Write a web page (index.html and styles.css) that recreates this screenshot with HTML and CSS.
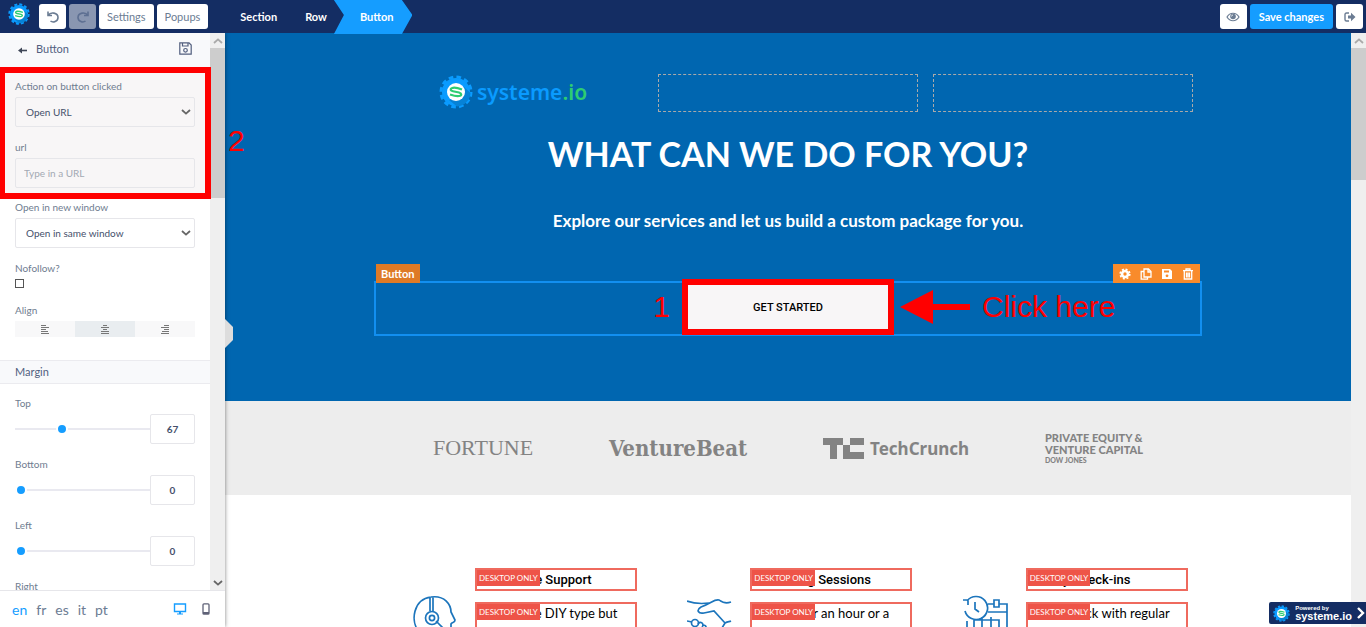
FILE: index.html
```html
<!doctype html>
<html lang="en">
    <head>
        <meta charset="utf-8">
        <title>Page editor</title>
        <link rel="stylesheet" href="styles.css">
    </head>
    <body>
        <svg class="defs" width="0" height="0">
            <symbol id="gear" viewBox="0 0 34 34">
                <circle cx="17" cy="17" r="14" fill="#0a9bff"/>
                <circle cx="17" cy="17" r="15" fill="none" stroke="#0a9bff" stroke-width="3" stroke-dasharray="4.600 3.254"/>
                <path d="M23 23 L10 25 L18 31.500 A14.500 14.500 0 0 0 31.500 18 L25 12 Z" fill="#0782d6"/>
                <circle cx="17" cy="17" r="9" fill="#fff"/>
                <path d="M23 14.500 C19 13 17 12.300 14 12.800 C11 13.500 11 15.500 14 16.200 L20 17.500 C23 18.500 23 20.500 20 21 C17 21.500 14 20.500 11 19.500" fill="none" stroke="#2ecc71" stroke-width="2.200"/>
            </symbol>
            <symbol id="chevron" viewBox="0 0 10 6">
                <path d="M1 1 L5 4.600 L9 1" fill="none" stroke="#666" stroke-width="1.800"/>
            </symbol>
        </svg>

        <header class="topbar">
            <svg class="logo"><use href="#gear"/></svg>
            <button class="btn icon" aria-label="Undo">
                <svg width="14" height="14" viewBox="0 0 14 14" fill="none" stroke="#6b7c93" stroke-width="1.600"><path d="M2 1.500 V5.500 H6 M2.300 5.300 C4.500 1.500 12 2.500 12 7.500 C12 11.500 7 13 4.500 11"/></svg>
            </button>
            <button class="btn icon disabled" aria-label="Redo">
                <svg width="14" height="14" viewBox="0 0 14 14" fill="none" stroke="#5d6f92" stroke-width="1.600"><path d="M12 1.500 V5.500 H8 M11.700 5.300 C9.500 1.500 2 2.500 2 7.500 C2 11.500 7 13 9.500 11"/></svg>
            </button>
            <button class="btn">Settings</button>
            <button class="btn">Popups</button>
            <nav class="crumbs">
                <a href="#">Section</a>
                <a href="#">Row</a>
                <a href="#" class="active">Button</a>
            </nav>
            <div class="actions">
                <button class="btn icon" aria-label="Preview">
                    <svg width="14" height="10" viewBox="0 0 14 10"><path d="M1 5 C4 0 10 0 13 5 C10 10 4 10 1 5 Z" fill="none" stroke="#6b7c93" stroke-width="1.200"/><circle cx="7" cy="4.500" r="2.800" fill="#6b7c93"/><path d="M5.500 4.500 A1.500 1.500 0 0 1 7 3" fill="none" stroke="#fff" stroke-width=".8"/></svg>
                </button>
                <button class="btn save">Save changes</button>
                <button class="btn icon" aria-label="Exit">
                    <svg width="12" height="10" viewBox="0 0 12 10"><path d="M5 1 H2.500 Q1 1 1 2.500 V7.500 Q1 9 2.500 9 H5" fill="none" stroke="#6b7c93" stroke-width="1.400"/><path d="M4 3.400 H7 V.8 L11.500 5 L7 9.200 V6.600 H4 Z" fill="#6b7c93"/></svg>
                </button>
            </div>
        </header>

        <div class="main">
            <aside class="sidebar">
                <div class="scroller">
                    <div class="panel">
                        <div class="panel_head">
                            <svg class="back" width="10" height="7" viewBox="0 0 10 7"><path d="M0 3.500 L4 .5 V6.500 Z" fill="#3f4757"/><path d="M3 3.500 H9" stroke="#3f4757" stroke-width="1.600"/></svg>
                            <span>Button</span>
                            <svg class="disk" width="13" height="13" viewBox="0 0 13 13" fill="none" stroke="#525f7f" stroke-width="1.200"><path d="M.8 .8 H10 L12.200 3 V12.200 H.8 Z M3.500 1 V4 H9 V1"/><circle cx="6.500" cy="8.300" r="1.800"/></svg>
                        </div>

                        <div class="marked">
                            <div class="field">
                                <label for="action">Action on button clicked</label>
                                <div class="select">
                                    <select id="action"><option>Open URL</option></select>
                                    <svg><use href="#chevron"/></svg>
                                </div>
                            </div>
                            <div class="field">
                                <label for="url">url</label>
                                <input class="text" id="url" type="text" placeholder="Type in a URL">
                            </div>
                        </div>

                        <div class="fields">
                            <div class="field">
                                <label for="target">Open in new window</label>
                                <div class="select">
                                    <select id="target"><option>Open in same window</option></select>
                                    <svg><use href="#chevron"/></svg>
                                </div>
                            </div>
                            <div class="field">
                                <label for="nofollow">Nofollow?</label>
                                <input class="check" id="nofollow" type="checkbox">
                            </div>
                            <div class="field">
                                <span class="label">Align</span>
                                <div class="align">
                                    <button aria-label="Left"><svg width="10" height="10" viewBox="0 0 10 10"><path d="M1 1.500 H6 M1 3.500 H9 M1 5.500 H6 M1 7.500 H8 M1 9.500 H9"/></svg></button>
                                    <button class="on" aria-label="Center"><svg width="10" height="10" viewBox="0 0 10 10"><path d="M3 1.500 H7 M1 3.500 H9 M3 5.500 H7 M1 7.500 H9 M1 9.500 H9"/></svg></button>
                                    <button aria-label="Right"><svg width="10" height="10" viewBox="0 0 10 10"><path d="M4 1.500 H9 M1 3.500 H9 M4 5.500 H9 M2 7.500 H9 M1 9.500 H9"/></svg></button>
                                </div>
                            </div>
                        </div>

                        <h3>Margin</h3>

                        <div class="fields">
                            <div class="field">
                                <label for="top">Top</label>
                                <div class="slider">
                                    <input type="range" id="top" min="0" max="200" value="67">
                                    <input type="text" class="num" value="67" aria-label="Top value">
                                </div>
                            </div>
                            <div class="field">
                                <label for="bottom">Bottom</label>
                                <div class="slider">
                                    <input type="range" id="bottom" min="0" max="200" value="0">
                                    <input type="text" class="num" value="0" aria-label="Bottom value">
                                </div>
                            </div>
                            <div class="field">
                                <label for="left">Left</label>
                                <div class="slider">
                                    <input type="range" id="left" min="0" max="200" value="0">
                                    <input type="text" class="num" value="0" aria-label="Left value">
                                </div>
                            </div>
                            <div class="field">
                                <label for="right">Right</label>
                                <div class="slider">
                                    <input type="range" id="right" min="0" max="200" value="0">
                                    <input type="text" class="num" value="0" aria-label="Right value">
                                </div>
                            </div>
                        </div>
                    </div>
                    <div class="scrollbar">
                        <svg class="up"><use href="#chevron"/></svg>
                        <div class="thumb"></div>
                        <svg class="down"><use href="#chevron"/></svg>
                    </div>
                </div>
                <footer class="langs">
                    <a href="#" class="current">en</a>
                    <a href="#">fr</a>
                    <a href="#">es</a>
                    <a href="#">it</a>
                    <a href="#">pt</a>
                    <div class="devices">
                        <svg width="14" height="12" viewBox="0 0 14 12"><path d="M1.500 1 H12.500 V8.500 H1.500 Z" fill="none" stroke="#159dff" stroke-width="1.400"/><path d="M6 9 H8 V10.500 H10 V11.500 H4 V10.500 H6 Z" fill="#159dff"/></svg>
                        <svg width="8" height="12" viewBox="0 0 8 12"><rect x="1" y=".8" width="6" height="10.400" rx="1" fill="none" stroke="#5f6277" stroke-width="1.300"/><path d="M1 9 H7 V11 H1 Z" fill="#5f6277"/></svg>
                    </div>
                </footer>
                <div class="handle"></div>
                <span class="note note_two">2</span>
            </aside>

            <main class="canvas">
                <div class="page">
                    <section class="hero">
                        <div class="container">
                            <div class="columns">
                                <div class="brand"><svg><use href="#gear"/></svg><span>systeme<b>.io</b></span></div>
                                <div class="empty"></div>
                                <div class="empty"></div>
                            </div>
                            <h1>WHAT CAN WE DO FOR YOU?</h1>
                            <p class="sub">Explore our services and let us build a custom package for you.</p>
                            <div class="selected">
                                <span class="tag">Button</span>
                                <div class="tools">
                                    <svg width="12" height="12" viewBox="0 0 12 12"><circle cx="6" cy="6" r="3" fill="none" stroke="#fff" stroke-width="2.600"/><circle cx="6" cy="6" r="4.800" fill="none" stroke="#fff" stroke-width="1.600" stroke-dasharray="2 1.770"/></svg>
                                    <svg width="12" height="12" viewBox="0 0 12 12" fill="none" stroke="#fff" stroke-width="1.300"><path d="M4 1 H8.500 L11 3.500 V9 H4 Z M8 1 V4 H11 M4 3.500 H1.200 V11.200 H7.500 V9"/></svg>
                                    <svg width="12" height="12" viewBox="0 0 12 12"><path d="M1 1 H9 L11 3 V11 H1 Z" fill="#fff"/><path d="M3 2.500 H8 V4.500 H3 Z" fill="#f98b2b"/><circle cx="6" cy="7.800" r="1.400" fill="#f98b2b"/></svg>
                                    <svg width="12" height="12" viewBox="0 0 12 12" fill="none" stroke="#fff" stroke-width="1.300"><path d="M1 2.700 H11 M4 2.500 V1 H8 V2.500 M2.300 3 V11 H9.700 V3 M4.500 4.500 V9.500 M6 4.500 V9.500 M7.500 4.500 V9.500"/></svg>
                                </div>
                                <button class="cta">GET STARTED</button>
                                <span class="note note_one">1</span>
                                <div class="note note_click">
                                    <svg width="70" height="34" viewBox="0 0 70 34"><path d="M0 17 L33 0 V14 H70 V20 H33 V34 Z" fill="red"/></svg>
                                    <span>Click here</span>
                                </div>
                            </div>
                        </div>
                    </section>

                    <section class="press">
                        <div class="container">
                            <span class="fortune">FORTUNE</span>
                            <span class="venture">VentureBeat</span>
                            <span class="crunch"><svg width="41" height="21" viewBox="0 0 41 21"><path d="M0 0 H20 V7 H14 V21 H7 V7 H0 Z M27 0 H41 V7 H27 Z M20 7 H27 V14 H41 V21 H20 Z" fill="#838383"/></svg>TechCrunch</span>
                            <span class="equity">PRIVATE EQUITY &amp;<br>VENTURE CAPITAL<small>DOW JONES</small></span>
                        </div>
                    </section>

                    <section class="features">
                        <div class="container">
                            <div class="feature">
                                <svg width="46" height="46" viewBox="0 0 46 46" fill="none" stroke="#1c75bc" stroke-width="1.700"><path d="M8 45 V38 C-3 26 2 4 19 2 C33 0 39 10 39 17 L43 25 C43 28 40 27 39 29 V35 M18 2 V16 M21 2 V16 M24 26 L34 36"/><circle cx="20" cy="23" r="6.500"/><circle cx="20" cy="23" r="2.600"/></svg>
                                <div class="copy">
                                    <div class="box"><span class="only">DESKTOP ONLY</span><h4>One-to-one Support</h4></div>
                                    <div class="box tall"><span class="only">DESKTOP ONLY</span><p>You are the DIY type but</p></div>
                                </div>
                            </div>
                            <div class="feature">
                                <svg width="46" height="46" viewBox="0 0 46 46" fill="none" stroke="#1c75bc" stroke-width="1.700"><path d="M0 6 C8 9 14 9 22 8 M44 7 C38 9 36 7 32 5 C27 4 25 8 14 12 C9 15 11 19 17 18 L27 16 L38 28 C41 26 42 27 44 26 M0 26 L5 27 M11 29 C13 25 18 29 15 32 M16 30 C20 30 20 34 17 37 M27 33 L33 38 M38 28 L35 33"/><circle cx="8" cy="28" r="3.500"/></svg>
                                <div class="copy">
                                    <div class="box"><span class="only">DESKTOP ONLY</span><h4>Consulting Sessions</h4></div>
                                    <div class="box tall"><span class="only">DESKTOP ONLY</span><p>Book us for an hour or a</p></div>
                                </div>
                            </div>
                            <div class="feature">
                                <svg width="46" height="46" viewBox="0 0 46 46" fill="none" stroke="#1c75bc" stroke-width="1.700"><path d="M4 6 A11.500 11.500 0 1 1 2 16 M0 5 H5 V10 M12 7 V14 L16 17 M25 9 H31 M36 9 H44 V45 M25 17 H44 M4 26 V45 M11 25 H36 V45 M11 25 V45 M19 22 V45 M28 22 V45 M11 33 H36 M31 5 H36 V12 H31 Z"/></svg>
                                <div class="copy">
                                    <div class="box"><span class="only">DESKTOP ONLY</span><h4>Weekly Check-ins</h4></div>
                                    <div class="box tall"><span class="only">DESKTOP ONLY</span><p>Get on track with regular</p></div>
                                </div>
                            </div>
                        </div>
                    </section>
                </div>
                <div class="scrollbar">
                    <svg class="up"><use href="#chevron"/></svg>
                    <div class="thumb"></div>
                </div>
                <a href="#" class="powered">
                    <svg class="gear"><use href="#gear"/></svg>
                    <span><small>Powered by</small>systeme.io</span>
                    <svg width="8" height="12" viewBox="0 0 8 12"><path d="M1 1 L6 6 L1 11" fill="none" stroke="#fff" stroke-width="2.400"/></svg>
                </a>
            </main>
        </div>
    </body>
</html>
```
FILE: styles.css
```css
* {
    box-sizing: border-box;
}
body {
    margin: 0;
    height: 100vh;
    overflow: hidden;
    display: flex;
    flex-direction: column;
    font-family: Lato, "Liberation Sans", sans-serif;
    font-size: 11px;
    color: #525f7f;
}
button, input, select {
    font-family: inherit;
    font-size: inherit;
    margin: 0;
}
a {
    text-decoration: none;
    color: inherit;
}
h1, h3, h4, p {
    margin: 0;
}
svg {
    display: block;
    flex: none;
}
.defs {
    position: absolute;
}

/* top bar */
.topbar {
    height: 33px;
    flex: none;
    display: flex;
    align-items: center;
    gap: 3px;
    padding: 0 3px 0 8px;
    background-color: #142d63;
    position: relative;
    z-index: 2;
}
.topbar .logo {
    width: 22px;
    height: 24px;
    margin: 0 6px 5px 0;
}
.btn {
    height: 25px;
    padding: 0 8px;
    border: 0;
    border-radius: 3px;
    background-color: #fff;
    color: #6b7c93;
    display: flex;
    align-items: center;
    justify-content: center;
}
.btn.icon {
    width: 27px;
    padding: 0;
}
.btn.disabled {
    background-color: #8996b1;
}
.btn.save {
    padding: 0 9px;
    background-color: #159dff;
    color: #fff;
    font-weight: bold;
}
.crumbs {
    display: flex;
    align-self: flex-start;
    margin-left: 15px;
    color: #fff;
    font-weight: bold;
    line-height: 33px;
}
.crumbs a {
    padding: 0 14px;
}
.crumbs .active {
    height: 34px;
    padding: 0 19px 0 26px;
    margin-left: -7px;
    background-color: #159dff;
    clip-path: polygon(0 0, 68px 0, 100% 15px, 68px 100%, 0 100%, 10px 15px);
}
.actions {
    display: flex;
    gap: 3px;
    margin-left: auto;
}

.main {
    flex: 1;
    min-height: 0;
    display: flex;
}

/* sidebar */
.sidebar {
    width: 225px;
    flex: none;
    display: flex;
    flex-direction: column;
    background-color: #fff;
    box-shadow: 0 0 4px rgba(0, 0, 0, .5);
    position: relative;
    z-index: 1;
}
.scroller {
    flex: 1;
    min-height: 0;
    display: flex;
    overflow: hidden;
}
.panel {
    flex: 1;
    min-width: 0;
    height: 100%;
}
.panel_head {
    height: 34px;
    padding: 0 18px 3px;
    display: flex;
    align-items: center;
    gap: 8px;
    background-color: #f8f9fb;
}
.back {
    margin-top: 4px;
}
.disk {
    margin-left: auto;
}
.marked {
    position: relative;
    margin-right: -1px;
    padding: 5px 10px;
    border: 6px solid #f00;
    border-left-width: 5px;
    background-color: #f8f6f7;
}
.fields {
    padding: 0 15px;
}
.field {
    margin-bottom: 12px;
    font-size: 10px;
}
.marked .field:last-child {
    margin-bottom: 0;
}
.field label, .label {
    display: block;
    line-height: 16px;
    margin-bottom: 3px;
    color: #6f7d90;
}
.text, select, .num {
    height: 30px;
    border: 1px solid #e6e6ea;
    border-radius: 2px;
    background-color: transparent;
    color: #45506b;
    outline: 0;
}
.text {
    display: block;
    width: 100%;
    padding: 0 8px;
}
.text::placeholder {
    color: #a3a9b3;
}
.select {
    position: relative;
}
select {
    display: block;
    width: 100%;
    padding: 0 10px;
    appearance: none;
}
.select svg {
    position: absolute;
    right: 4px;
    top: 12px;
    width: 10px;
    height: 6px;
}
.check {
    display: block;
    appearance: none;
    width: 9px;
    height: 9px;
    border: 1px solid #555;
    margin-bottom: 14px;
}
.align {
    display: flex;
}
.align button {
    flex: 1;
    height: 16px;
    padding: 0;
    border: 0;
    display: flex;
    align-items: center;
    justify-content: center;
    background-color: #f8f8f9;
}
.align .on {
    background-color: #e9edf0;
}
.align svg {
    stroke: #777;
}
.sidebar h3 {
    margin: 23px 0 11px;
    padding: 0 15px;
    border: solid #ebebef;
    border-width: 1px 0;
    background-color: #f8f9fb;
    font-size: 11px;
    font-weight: normal;
    line-height: 22px;
}
.slider {
    display: flex;
    align-items: center;
}
.slider input[type=range] {
    flex: 1;
    min-width: 0;
    appearance: none;
    height: 12px;
    background: linear-gradient(#e9e9f0, #e9e9f0) center / 100% 2px no-repeat;
}
.slider input[type=range]::-webkit-slider-thumb {
    appearance: none;
    width: 12px;
    height: 12px;
    border: 2px solid #fff;
    border-radius: 50%;
    background-color: #159dff;
}
.num {
    width: 45px;
    padding: 0;
    text-align: center;
    font-weight: bold;
}
.langs {
    flex: none;
    height: 37px;
    display: flex;
    align-items: center;
    gap: 9px;
    padding: 0 15px 0 12px;
    border-top: 1px solid #e6e6ea;
    background-color: #fff;
    font-size: 14px;
    color: #6b7c93;
    position: relative;
}
.langs .current {
    color: #159dff;
}
.devices {
    display: flex;
    gap: 15px;
    margin-left: auto;
}
.handle {
    position: absolute;
    left: 100%;
    top: 286px;
    width: 8px;
    height: 29px;
    background-color: #ddd;
    clip-path: polygon(0 0, 100% 8px, 100% 21px, 0 100%);
}

/* scrollbars */
.scrollbar {
    flex: none;
    width: 15px;
    display: flex;
    flex-direction: column;
    align-items: center;
    background-color: #efefef;
}
.scrollbar svg {
    width: 10px;
    height: 6px;
    margin: 5px 0 4px;
}
.scrollbar .up {
    transform: rotate(180deg);
    opacity: .5;
}
.scrollbar .down {
    margin-top: auto;
}
.scrollbar .thumb {
    width: 15px;
    height: 150px;
    background-color: #cdcdcd;
}
.canvas .thumb {
    height: 132px;
}

/* page being edited */
.canvas {
    flex: 1;
    min-width: 0;
    display: flex;
    position: relative;
    background-color: #fff;
}
.page {
    flex: 1;
    min-width: 0;
    overflow: hidden;
}
.container {
    max-width: 826px;
    margin: 0 auto;
}
.hero {
    padding: 41px 0 65px;
    background-color: #0066b0;
    color: #fff;
    text-align: center;
}
.columns {
    display: grid;
    grid-template-columns: repeat(3, 1fr);
    gap: 15px;
    padding: 0 8px;
}
.empty {
    height: 38px;
    border: 1px dashed #a9a9a9;
}
.brand {
    display: flex;
    align-items: center;
    justify-content: center;
    gap: 4px;
    height: 36px;
    font-family: "Noto Sans", sans-serif;
    font-size: 21px;
    font-weight: 600;
    line-height: 30px;
    color: #0a9bff;
}
.brand svg {
    width: 34px;
    height: 34px;
}
.brand b {
    font-weight: 600;
    color: #2ecc71;
}
h1 {
    margin-top: 19px;
    font-size: 34px;
    line-height: 46px;
}
.sub {
    margin-top: 31px;
    font-size: 17px;
    font-weight: bold;
    line-height: 26px;
}
.selected {
    position: relative;
    margin: 47px -1px 0;
    height: 55px;
    border: 2px solid #128ff0;
    display: flex;
    justify-content: center;
}
.cta {
    margin-top: -4px;
    width: 212px;
    height: 56px;
    border: 6px solid #f00;
    background-color: #f8f6f7;
    color: #000;
    font-family: Roboto, sans-serif;
    font-size: 11px;
    font-weight: 500;
}
.tag, .tools {
    position: absolute;
    bottom: 100%;
    height: 19px;
    line-height: 19px;
}
.tag {
    left: 0;
    padding: 0 5px;
    background-color: #de7a26;
    font-weight: bold;
}
.tools {
    right: 0;
    display: flex;
    align-items: center;
    gap: 9px;
    padding: 0 6px;
    background-color: #f98b2b;
}

/* callouts */
.note {
    position: absolute;
    color: #f00;
    font-family: "Liberation Sans", Arial, sans-serif;
    font-size: 30px;
    line-height: 36px;
}
.note_two {
    left: 228px;
    top: 90px;
}
.note_one {
    right: 530px;
    top: 6px;
}
.note_click {
    left: 524px;
    top: 6px;
    display: flex;
    align-items: center;
    gap: 12px;
}

.press {
    background-color: #ededed;
    color: #838383;
}
.press .container {
    height: 94px;
    padding: 0 58px;
    display: flex;
    align-items: center;
    justify-content: space-between;
}
.fortune {
    font-family: "Liberation Serif", serif;
    font-size: 22px;
}
.venture {
    font-family: "DejaVu Serif Condensed", "DejaVu Serif", serif;
    font-size: 22px;
    font-weight: bold;
}
.crunch {
    display: flex;
    align-items: center;
    gap: 6px;
    font-family: "Noto Sans", sans-serif;
    font-size: 17px;
    font-weight: bold;
}
.equity {
    font-size: 11px;
    font-weight: 900;
    line-height: 12px;
}
.equity small {
    display: block;
    font-size: 7px;
    line-height: 8px;
}

.features {
    padding-top: 73px;
    color: #000;
}
.features .container {
    display: grid;
    grid-template-columns: repeat(3, 1fr);
}
.feature {
    display: flex;
    gap: 17px;
    padding-left: 37px;
}
.feature > svg {
    margin-top: 27px;
}
.copy {
    width: 162px;
}
.box {
    position: relative;
    height: 23px;
    margin-bottom: 11px;
    border: 2px solid #ef6a5e;
    line-height: 19px;
    white-space: nowrap;
}
.box.tall {
    height: 80px;
}
.only {
    position: absolute;
    left: 0;
    top: 0;
    padding: 0 2px;
    background-color: #ee5448;
    color: #fff;
    font-size: 8px;
    line-height: 16px;
}
.box h4 {
    font-family: Roboto, sans-serif;
    font-size: 13px;
    font-weight: 500;
}
.box p {
    font-size: 13px;
}

.powered {
    position: absolute;
    right: 0;
    bottom: 3px;
    height: 22px;
    display: flex;
    align-items: center;
    gap: 5px;
    padding: 0 1px 0 4px;
    border-radius: 2px 0 0 2px;
    background-color: #142d63;
    color: #fff;
    font-family: "Liberation Sans", Arial, sans-serif;
    font-size: 11px;
    font-weight: bold;
    line-height: 11px;
}
.powered .gear {
    width: 17px;
    height: 17px;
}
.powered small {
    display: block;
    font-size: 6px;
    line-height: 6px;
}
```
